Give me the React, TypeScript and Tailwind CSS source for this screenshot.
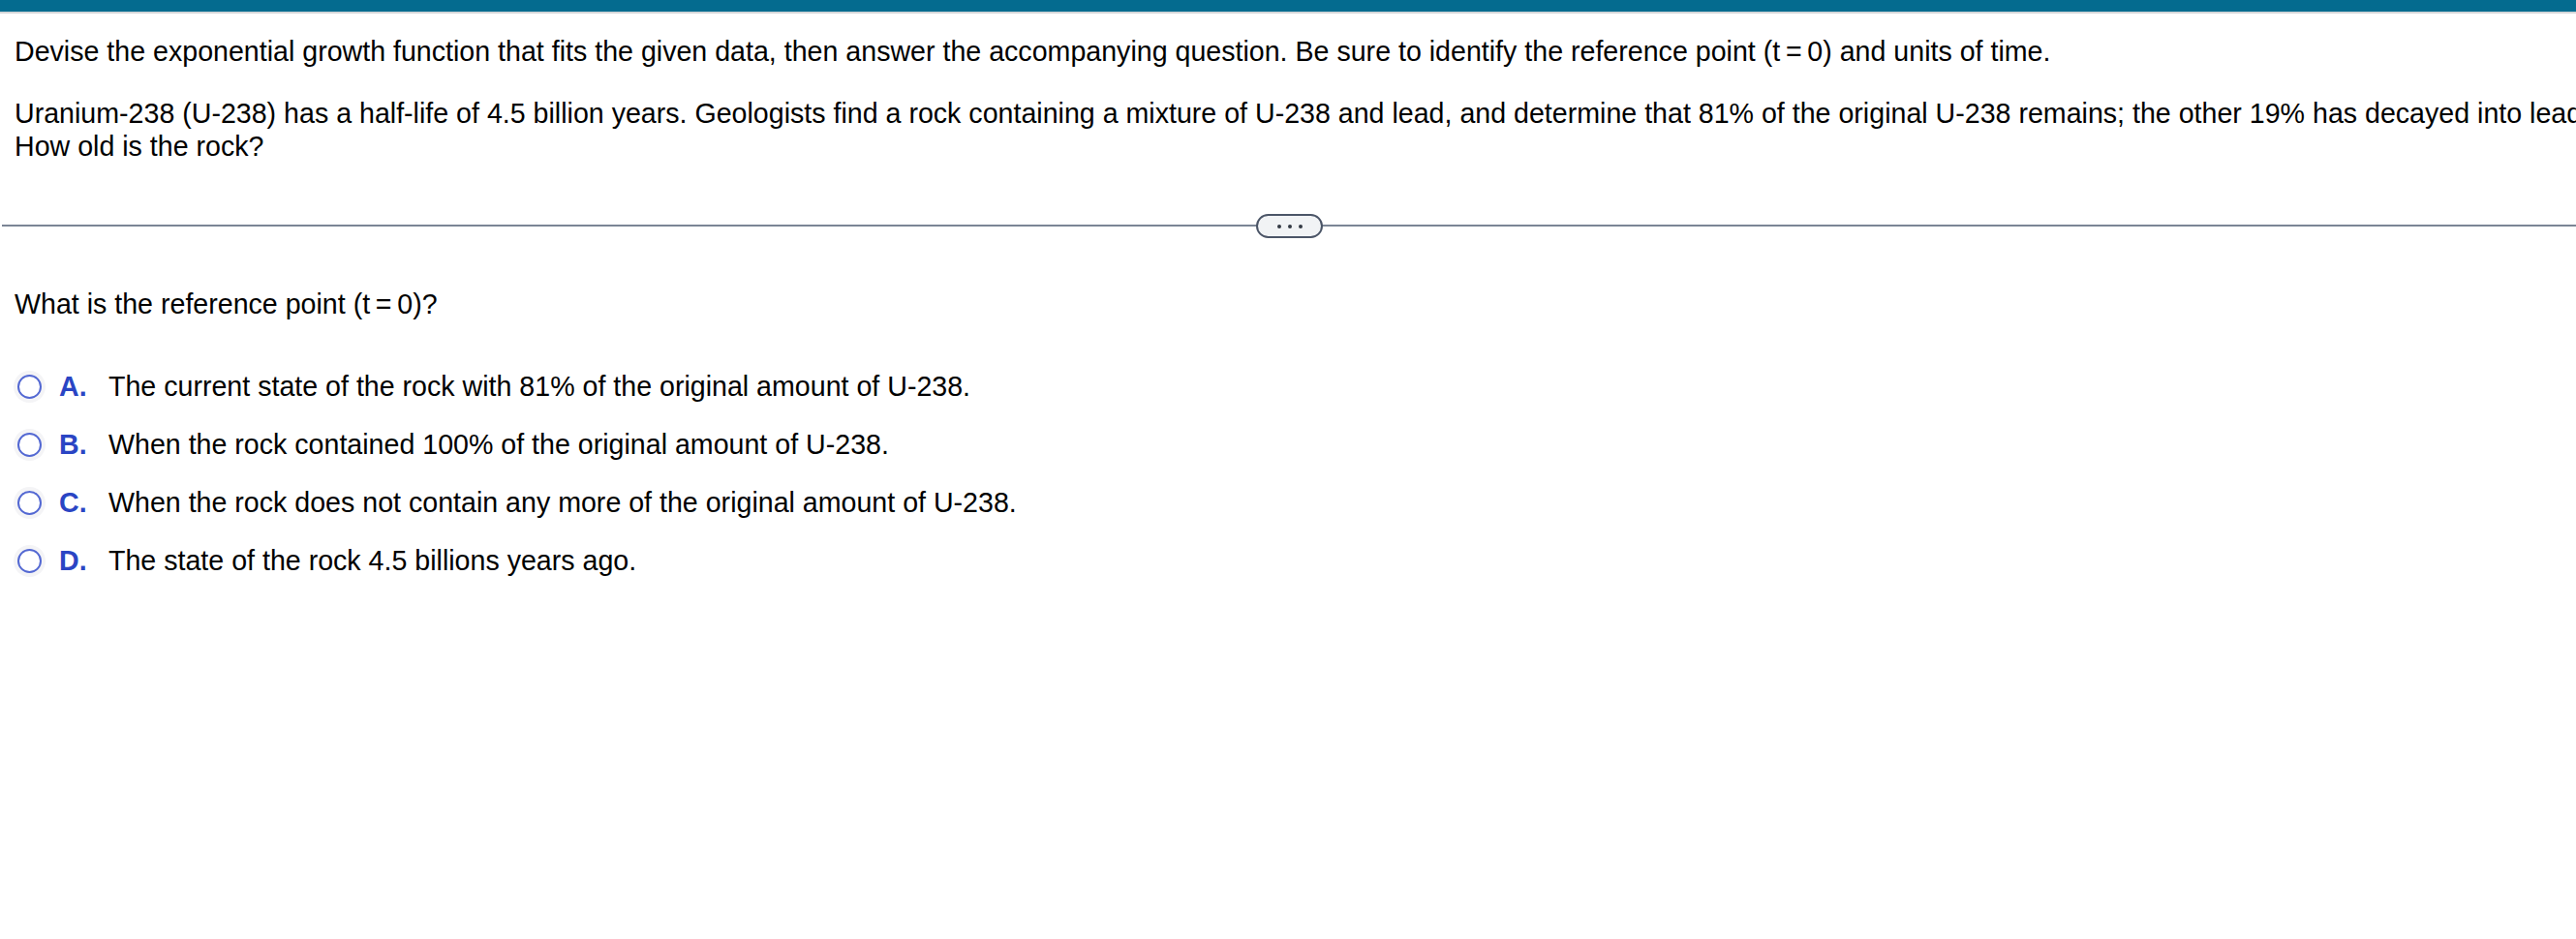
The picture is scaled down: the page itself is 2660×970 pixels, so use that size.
import React from "react";

const options = [
  { letter: "A.", text: "The current state of the rock with 81% of the original amount of U-238." },
  { letter: "B.", text: "When the rock contained 100% of the original amount of U-238." },
  { letter: "C.", text: "When the rock does not contain any more of the original amount of U-238." },
  { letter: "D.", text: "The state of the rock 4.5 billions years ago." },
];

const App = () => {
  return (
    <div
      className="w-full min-h-screen overflow-hidden bg-white text-black"
      style={{ fontFamily: '"Liberation Sans", Arial, sans-serif' }}>
      <div className="h-[12px] bg-[#046b8f]" />
      <div className="h-[2px] bg-[#d4d6d9]" />

      <div className="pl-[15px] text-[28.6px] leading-[34px] whitespace-nowrap">
        <p className="mt-[22px]">
          Devise the exponential growth function that fits the given data, then answer the accompanying
          question. Be sure to identify the reference point (t&#8201;=&#8201;0) and units of time.
        </p>
        <p className="mt-[30px]">
          Uranium-238 (U-238) has a half-life of 4.5 billion years. Geologists find a rock containing a
          mixture of U-238 and lead, and determine that 81% of the original U-238 remains; the other 19%
          has decayed into lead.
          <br />
          How old is the rock?
        </p>
      </div>

      <div className="relative mt-[64px] ml-[2px] h-[2px] bg-[#7b8595]">
        <button className="absolute left-[1295px] top-[-11px] flex h-[25px] w-[69px] items-center justify-center gap-[7px] rounded-full border-2 border-[#4b5567] bg-[#f1f3f5]">
          <span className="h-[4px] w-[4px] rounded-full bg-[#333a44]" />
          <span className="h-[4px] w-[4px] rounded-full bg-[#333a44]" />
          <span className="h-[4px] w-[4px] rounded-full bg-[#333a44]" />
        </button>
      </div>

      <div className="pl-[15px] text-[28.6px] leading-[34px] whitespace-nowrap">
        <p className="mt-[63px]">What is the reference point (t&#8201;=&#8201;0)?</p>
        <div className="mt-[51px] flex flex-col gap-[26px]">
          {options.map((o) => (
            <label key={o.letter} className="flex items-center">
              <span className="ml-[3px] h-[25px] w-[25px] shrink-0 rounded-full border-2 border-[#5368d2] shadow-[0_0_0_4px_#f4f4f6]" />
              <span className="ml-[18px] w-[51px] font-bold text-[#2a45c4]">{o.letter}</span>
              <span>{o.text}</span>
            </label>
          ))}
        </div>
      </div>
    </div>
  );
};

export default App;
